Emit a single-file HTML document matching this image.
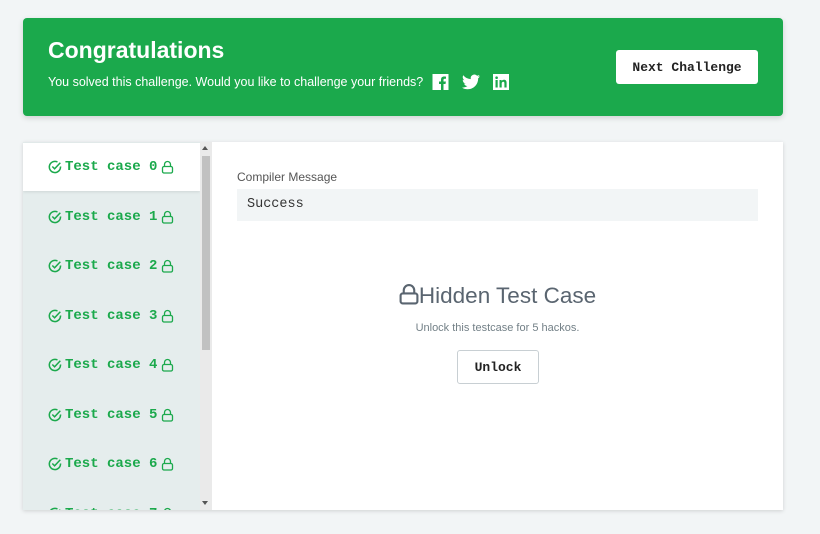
<!DOCTYPE html>
<html><head><style>
body{margin:0;width:820px;height:534px;background:#f2f5f6;font-family:"Liberation Sans",sans-serif;position:relative;overflow:hidden}
.banner{position:absolute;left:23px;top:18px;width:760px;height:98px;background:#1ba94c;border-radius:4px;box-shadow:0 2px 6px rgba(0,0,0,.15)}
.banner h1{position:absolute;left:25px;top:19px;margin:0;color:#fff;font-size:23px;font-weight:bold}
.banner p{position:absolute;left:25px;top:57px;margin:0;color:#fff;font-size:12.5px}
.icons{position:absolute;left:409px;top:56px;display:flex;gap:13px}
.btn{position:absolute;left:593px;top:32px;width:142px;height:34px;background:#fff;border-radius:3px;font-family:"Liberation Mono",monospace;font-weight:bold;font-size:13px;color:#222;display:flex;align-items:center;justify-content:center}
.card{position:absolute;left:23px;top:142px;width:760px;height:368px;background:#fff;box-shadow:0 1px 4px rgba(0,0,0,.15);overflow:hidden}
.side{position:absolute;left:0;top:0;width:189px;height:368px;background:#e5eded}
.tab{position:absolute;left:0;width:177px;height:48px;display:flex;align-items:center;padding-left:25px;box-sizing:border-box;color:#1ba94c;font-family:"Liberation Mono",monospace;font-weight:bold;font-size:14px}
.tab.a{background:#fff;box-shadow:0 1px 3px rgba(0,0,0,.1)}
.sb{position:absolute;left:177px;top:0;width:12px;height:368px;background:#eaeaea}
.thumb{position:absolute;left:179px;top:14px;width:8px;height:194px;background:#c1c1c1}
.lbl{position:absolute;left:214px;top:28px;font-size:12px;color:#555}
.msg{position:absolute;left:214px;top:47px;width:521px;height:32px;background:#f2f5f6;font-family:"Liberation Mono",monospace;font-size:13.5px;color:#333;line-height:32px;padding-left:10px;box-sizing:border-box}
.hid{position:absolute;left:214px;top:141px;width:521px;text-align:center;font-size:22.5px;color:#5a6570}
.sub{position:absolute;left:214px;top:180px;width:521px;text-align:center;font-size:11px;color:#738087}
.ub{position:absolute;left:434px;top:208px;width:82px;height:34px;border:1px solid #c8cfd3;border-radius:3px;font-family:"Liberation Mono",monospace;font-weight:bold;font-size:13px;color:#222;display:flex;align-items:center;justify-content:center;box-sizing:border-box}
</style></head><body>
<div class="banner"><h1>Congratulations</h1><p>You solved this challenge. Would you like to challenge your friends?</p>
<div class="icons">
<svg width="17" height="16" viewBox="0 0 16 16"><rect width="16" height="16" fill="#fff"/><path d="M11 16V10h2l.4-2.5H11V6c0-.7.3-1.2 1.3-1.2h1.2V2.6c-.3 0-1.1-.1-1.9-.1-1.9 0-3.1 1.1-3.1 3.2V7.5H6.5V10h2v6z" fill="#1ba94c"/></svg>
<svg width="18" height="16" viewBox="0 0 24 20"><path d="M24 2.4a10 10 0 0 1-2.8.8A5 5 0 0 0 23.3.5a10 10 0 0 1-3.1 1.2A4.9 4.9 0 0 0 11.8 6.2 14 14 0 0 1 1.7 1 4.9 4.9 0 0 0 3.2 7.6 4.9 4.9 0 0 1 1 7v.1a4.9 4.9 0 0 0 3.9 4.8 5 5 0 0 1-2.2.1 4.9 4.9 0 0 0 4.6 3.4A9.9 9.9 0 0 1 0 17.5 14 14 0 0 0 7.5 19.7c9 0 14-7.5 14-14v-.6A10 10 0 0 0 24 2.4z" fill="#fff"/></svg>
<svg width="16" height="16" viewBox="0 0 16 16"><rect width="16" height="16" fill="#fff"/><rect x="2.5" y="6" width="2.2" height="7.5" fill="#1ba94c"/><circle cx="3.6" cy="3.7" r="1.3" fill="#1ba94c"/><path d="M6.5 6h2.1v1c.4-.7 1.3-1.2 2.4-1.2 2 0 2.6 1.3 2.6 3.1v4.6h-2.2V9.3c0-.9-.2-1.6-1.1-1.6s-1.6.7-1.6 1.6v4.2H6.5z" fill="#1ba94c"/></svg>
</div>
<div class="btn">Next Challenge</div></div>
<div class="card"><div class="side">
<div class="tab a" style="top:1px">TC0</div>
<div class="tab" style="top:51px">TC1</div>
<div class="tab" style="top:100px">TC2</div>
<div class="tab" style="top:150px">TC3</div>
<div class="tab" style="top:199px">TC4</div>
<div class="tab" style="top:249px">TC5</div>
<div class="tab" style="top:298px">TC6</div>
<div class="tab" style="top:348px">TC7</div>
</div>
<div class="sb"></div><div class="thumb"></div>
<div style="position:absolute;left:179px;top:4px;width:0;height:0;border:3px solid transparent;border-bottom:4px solid #555;border-top:0"></div>
<div style="position:absolute;left:179px;top:359px;width:0;height:0;border:3px solid transparent;border-top:4px solid #555;border-bottom:0"></div>
<div class="lbl">Compiler Message</div>
<div class="msg">Success</div>
<div class="hid"><svg width="20" height="21" viewBox="0 0 19 20" style="vertical-align:-2px"><path d="M4.5 9V6a5 5 0 0 1 10 0v3" fill="none" stroke="#5a6570" stroke-width="2"/><rect x="1.5" y="9" width="16" height="9.5" rx="2" fill="none" stroke="#5a6570" stroke-width="2"/></svg>Hidden Test Case</div>
<div class="sub">Unlock this testcase for 5 hackos.</div>
<div class="ub">Unlock</div>
</div>
<script>
document.querySelectorAll('.tab').forEach(function(t,i){t.innerHTML='<svg width="14" height="14" viewBox="0 0 14 14" style="margin-right:3px"><path d="M12.5 6.5A5.6 5.6 0 1 1 9.5 2" fill="none" stroke="#1ba94c" stroke-width="1.5"/><path d="M4.3 6.5 6.6 8.8 12.3 2.7" fill="none" stroke="#1ba94c" stroke-width="1.5"/></svg>Test case '+i+'<svg width="13" height="14" viewBox="0 0 13 14" style="margin-left:4px"><path d="M3.5 6.5V4.5a3 3 0 0 1 6 0v2" fill="none" stroke="#1ba94c" stroke-width="1.3"/><rect x="1.5" y="6.5" width="10" height="6.5" rx="1.5" fill="none" stroke="#1ba94c" stroke-width="1.3"/></svg>';});
</script>
</body></html>
